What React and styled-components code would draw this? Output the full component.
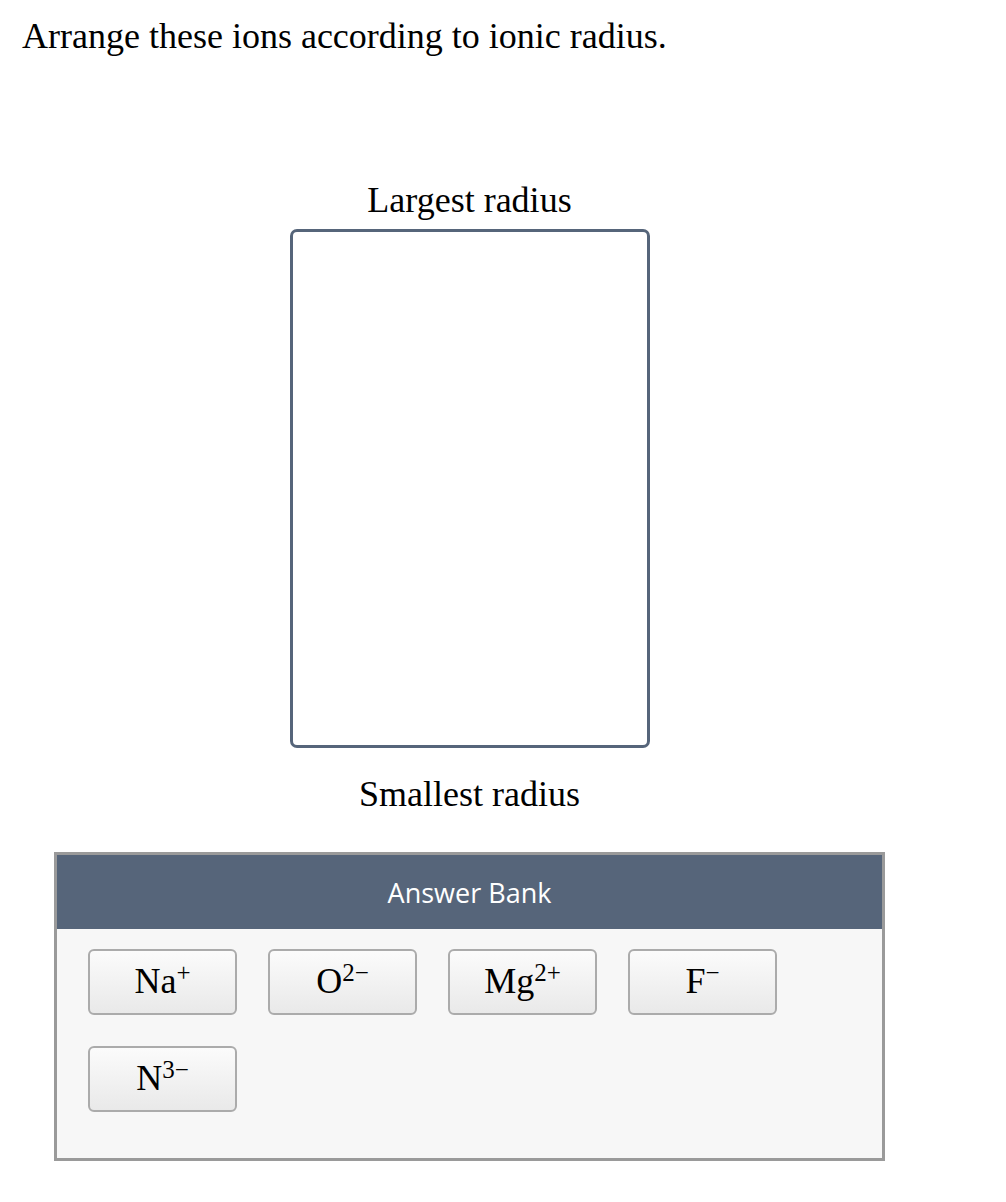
import React from 'react';
import styled, { createGlobalStyle } from 'styled-components';

const ions = [
  { symbol: 'Na', charge: '+' },
  { symbol: 'O', charge: '2−' },
  { symbol: 'Mg', charge: '2+' },
  { symbol: 'F', charge: '−' },
  { symbol: 'N', charge: '3−' },
];

function App() {
  return (
    <Page>
      <GlobalStyle />
      <Prompt>Arrange these ions according to ionic radius.</Prompt>
      <Workspace>
        <RankLabel $top>Largest radius</RankLabel>
        <DropZone />
        <RankLabel>Smallest radius</RankLabel>
        <Bank>
          <BankHeader>Answer Bank</BankHeader>
          <BankBody>
            {ions.map((ion) => (
              <IonTile key={ion.symbol}>
                {ion.symbol}
                <Charge>{ion.charge}</Charge>
              </IonTile>
            ))}
          </BankBody>
        </Bank>
      </Workspace>
    </Page>
  );
}

const GlobalStyle = createGlobalStyle`
  body {
    margin: 0;
    background: #fff;
    font-family: 'Liberation Serif', 'Times New Roman', serif;
    color: #000;
  }
`;

const Page = styled.div`
  padding: 16px 0 40px 22px;
`;

const Prompt = styled.div`
  font-size: 36px;
  line-height: 40px;
`;

const Workspace = styled.div`
  width: 831px;
  margin: 0 0 0 32px;
  display: flex;
  flex-direction: column;
  align-items: center;
`;

const RankLabel = styled.div`
  font-size: 36px;
  line-height: 40px;
  margin-top: ${(p) => (p.$top ? '124px' : '26px')};
  margin-bottom: ${(p) => (p.$top ? '9px' : '38px')};
`;

const DropZone = styled.div`
  box-sizing: border-box;
  width: 360px;
  height: 519px;
  border: 3px solid #56657a;
  border-radius: 7px;
  background: #fff;
`;

const Bank = styled.div`
  box-sizing: border-box;
  width: 831px;
  border: 3px solid #9a9a9a;
  background: #f7f7f7;
`;

const BankHeader = styled.div`
  height: 74px;
  background: #56657a;
  color: #fff;
  font-family: 'Open Sans', 'Noto Sans', sans-serif;
  font-size: 27px;
  font-weight: 500;
  display: flex;
  align-items: center;
  justify-content: center;
`;

const BankBody = styled.div`
  display: flex;
  flex-wrap: wrap;
  gap: 31px;
  padding: 20px 31px 46px 31px;
`;

const IonTile = styled.div`
  box-sizing: border-box;
  width: 149px;
  height: 66px;
  border: 2px solid #ababab;
  border-radius: 6px;
  background: linear-gradient(#fbfbfb, #e9e9e9);
  font-size: 36px;
  line-height: 1;
  display: flex;
  align-items: center;
  justify-content: center;
  padding-bottom: 2px;
`;

const Charge = styled.sup`
  font-size: 25px;
  line-height: 0;
  position: relative;
  top: -8px;
`;

export default App;
